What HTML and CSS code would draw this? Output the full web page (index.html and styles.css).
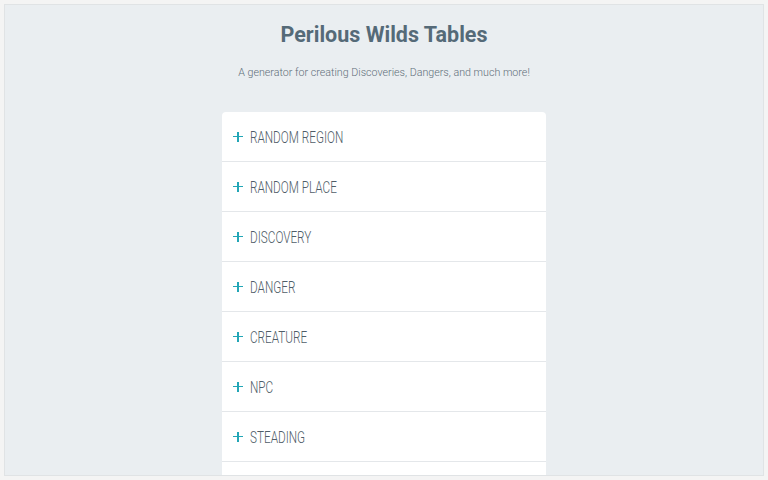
FILE: index.html
```html
<!DOCTYPE html>
<html lang="en">
<head>
    <meta charset="UTF-8">
    <meta name="viewport" content="width=device-width, initial-scale=1.0">
    <title>Perilous Wilds Tables</title>
    <link rel="stylesheet" href="styles.css">
</head>
<body>
    <div class="page">
        <header class="header">
            <h1 class="title">Perilous Wilds Tables</h1>
            <p class="subtitle">A generator for creating Discoveries, Dangers, and much more!</p>
        </header>

        <ul class="tables">
            <li class="table-row"><span class="plus"></span><span class="label">Random Region</span></li>
            <li class="table-row"><span class="plus"></span><span class="label">Random Place</span></li>
            <li class="table-row"><span class="plus"></span><span class="label">Discovery</span></li>
            <li class="table-row"><span class="plus"></span><span class="label">Danger</span></li>
            <li class="table-row"><span class="plus"></span><span class="label">Creature</span></li>
            <li class="table-row"><span class="plus"></span><span class="label">NPC</span></li>
            <li class="table-row"><span class="plus"></span><span class="label">Steading</span></li>
            <li class="table-row"></li>
        </ul>
    </div>
</body>
</html>
```

FILE: styles.css
```css
* {
    margin: 0;
    padding: 0;
    box-sizing: border-box;
}

body {
    font-family: 'Roboto', 'Liberation Sans', sans-serif;
    background: #f4f4f4;
    height: 480px;
    overflow: hidden;
    padding: 4px;
}

.page {
    height: 472px;
    background: #eaeef1;
    border: 1px solid #e0e3e5;
    overflow: hidden;
}

.header {
    text-align: center;
    padding-top: 15px;
}

.title {
    font-size: 21.5px;
    font-weight: 700;
    color: #556a78;
    line-height: 30px;
}

.subtitle {
    margin-top: 16px;
    font-size: 10.7px;
    font-weight: 300;
    color: #5f6e7a;
    line-height: 14px;
}

.tables {
    list-style: none;
    width: 324px;
    margin: 32px auto 0;
    background: #fff;
    border-radius: 4px;
}

.table-row {
    height: 50px;
    display: flex;
    align-items: center;
    padding-left: 11px;
    border-bottom: 1px solid #e4e7ea;
}

.label {
    display: inline-block;
    font-family: 'Roboto', sans-serif;
    font-weight: 300;
    font-size: 17px;
    color: #4f5d68;
    text-transform: uppercase;
    transform: scaleX(0.69);
    transform-origin: left center;
    white-space: nowrap;
}

.plus {
    position: relative;
    width: 10px;
    height: 10px;
    margin-right: 7px;
}

.plus::before,
.plus::after {
    content: '';
    position: absolute;
    background: #22a6b6;
}

.plus::before {
    left: 0;
    top: 4px;
    width: 10px;
    height: 1.5px;
}

.plus::after {
    left: 4.25px;
    top: 0;
    width: 1.5px;
    height: 10px;
}
```
